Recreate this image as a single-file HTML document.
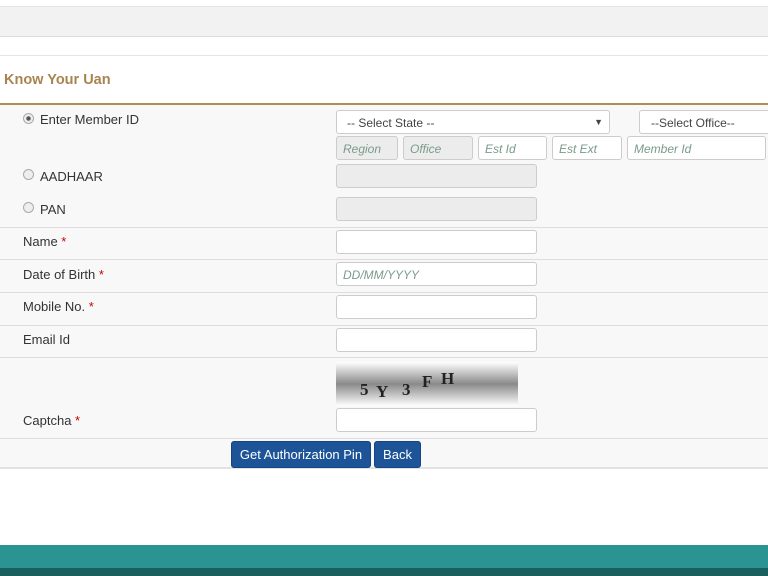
<!DOCTYPE html><html><head><style>
*{box-sizing:border-box;margin:0;padding:0}
body{width:768px;height:576px;overflow:hidden;position:relative;background:#fff;font-family:"Liberation Sans",sans-serif;font-size:13px;color:#333}
.a{position:absolute}
.l{height:1px;left:0;width:768px;background:#ddd}
.in{position:absolute;background:#fff;border:1px solid #ccc;border-radius:3px;height:24px;font-style:italic;color:#7a9a8a;font-size:12px;padding:5px 6px}
.dis{background:#ececec}
.lab{position:absolute;left:23px;font-size:13px;color:#333}
.r{display:inline-block;width:11px;height:11px;border:1px solid #aaa;border-radius:50%;background:#eee;position:absolute;left:23px}
.req{color:#c00}
.btn{position:absolute;background:#1c5497;color:#fff;border-radius:3px;border:1px solid #154480;height:27px;font-size:13px;text-align:center;line-height:25px}
</style></head><body>
<div class="a" style="top:6px;left:0;width:768px;height:31px;background:#f2f2f2;border-top:1px solid #e4e4e4;border-bottom:1px solid #dcdcdc"></div>
<div class="a l" style="top:55px;background:#e6e6e6"></div>
<div class="a" style="top:72px;left:4px;font-weight:bold;font-size:14.5px;color:#a88450">Know Your Uan</div>
<div class="a" style="top:103px;left:0;width:768px;height:2px;background:#b08d57"></div>
<div class="a" style="top:105px;left:0;width:768px;height:364px;background:#f8f8f8;border-bottom:2px solid #e2e2e2"></div>
<div class="a l" style="top:227px"></div><div class="a l" style="top:259px"></div><div class="a l" style="top:292px"></div><div class="a l" style="top:325px"></div><div class="a l" style="top:357px"></div><div class="a l" style="top:438px"></div>
<span class="r" style="top:113px;background:radial-gradient(#555 30%,#eee 40%)"></span><div class="lab" style="left:40px;top:112px">Enter Member ID</div>
<span class="r" style="top:169px"></span><div class="lab" style="left:40px;top:169px">AADHAAR</div>
<span class="r" style="top:202px"></span><div class="lab" style="left:40px;top:202px">PAN</div>
<div class="lab" style="top:234px">Name <span class="req">*</span></div>
<div class="lab" style="top:267px">Date of Birth <span class="req">*</span></div>
<div class="lab" style="top:299px">Mobile No. <span class="req">*</span></div>
<div class="lab" style="top:332px">Email Id</div>
<div class="lab" style="top:413px">Captcha <span class="req">*</span></div>
<div class="in" style="left:336px;top:110px;width:274px;font-style:normal;color:#444;padding-left:10px">-- Select State --<span style="position:absolute;right:6px;font-size:9px;top:6px">▼</span></div>
<div class="in" style="left:639px;top:110px;width:140px;font-style:normal;color:#444;padding-left:11px">--Select Office--</div>
<div class="in dis" style="left:336px;top:136px;width:62px">Region</div>
<div class="in dis" style="left:403px;top:136px;width:70px">Office</div>
<div class="in" style="left:478px;top:136px;width:69px">Est Id</div>
<div class="in" style="left:552px;top:136px;width:70px">Est Ext</div>
<div class="in" style="left:627px;top:136px;width:139px">Member Id</div>
<div class="in dis" style="left:336px;top:164px;width:201px"></div>
<div class="in dis" style="left:336px;top:197px;width:201px"></div>
<div class="in" style="left:336px;top:230px;width:201px"></div>
<div class="in" style="left:336px;top:262px;width:201px">DD/MM/YYYY</div>
<div class="in" style="left:336px;top:295px;width:201px"></div>
<div class="in" style="left:336px;top:328px;width:201px"></div>
<div class="a" style="left:336px;top:362px;width:182px;height:44px;background:linear-gradient(#fff,#8a8a8a 50%,#fff);font-family:'Liberation Serif',serif;font-weight:bold;font-size:17px;color:#222">
<span class="a" style="left:24px;top:18px">5</span><span class="a" style="left:40px;top:20px">Y</span><span class="a" style="left:66px;top:18px">3</span><span class="a" style="left:86px;top:10px">F</span><span class="a" style="left:105px;top:7px">H</span></div>
<div class="in" style="left:336px;top:408px;width:201px"></div>
<div class="btn" style="left:231px;top:441px;width:140px">Get Authorization Pin</div>
<div class="btn" style="left:374px;top:441px;width:47px">Back</div>
<div class="a" style="top:545px;left:0;width:768px;height:23px;background:#2a9492"></div>
<div class="a" style="top:568px;left:0;width:768px;height:8px;background:#1a5e5e"></div>
</body></html>
